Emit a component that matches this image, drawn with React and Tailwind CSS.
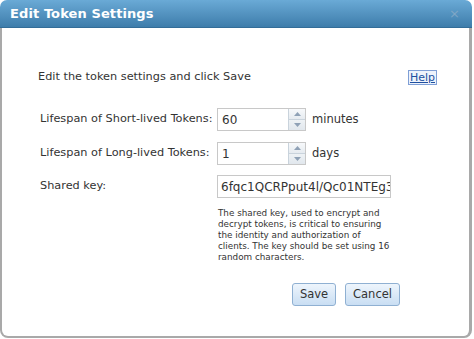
import React from "react";

function Spinner() {
  return (
    <div className="flex flex-col w-[17px] h-full border-l border-[#c9d3dc]">
      <div className="flex-1 flex items-center justify-center bg-gradient-to-b from-[#f7f9fb] to-[#e6ebf0] border-b border-[#c9d3dc]">
        <svg width="7" height="4" viewBox="0 0 7 4"><path d="M0 4 L3.5 0 L7 4 Z" fill="#8fa1b6" /></svg>
      </div>
      <div className="flex-1 flex items-center justify-center bg-gradient-to-b from-[#eef2f5] to-[#e1e7ed]">
        <svg width="7" height="4" viewBox="0 0 7 4"><path d="M0 0 L3.5 4 L7 0 Z" fill="#8fa1b6" /></svg>
      </div>
    </div>
  );
}

function NumberField({ value, unit }) {
  return (
    <div className="flex items-center gap-[6px]">
      <div className="flex w-[89px] h-[23px] border border-[#c8c8c8] bg-white">
        <div className="flex-1 flex items-center pl-[4px] text-[12px] text-[#333]">{value}</div>
        <Spinner />
      </div>
      <span className="text-[11.5px] text-[#333]">{unit}</span>
    </div>
  );
}

const helpLines = [
  "The shared key, used to encrypt and",
  "decrypt tokens, is critical to ensuring",
  "the identity and authorization of",
  "clients. The key should be set using 16",
  "random characters.",
];

export default function App() {
  return (
    <div className="w-[474px] h-[339px] bg-white" style={{ fontFamily: '"DejaVu Sans", Verdana, sans-serif' }}>
      <div className="w-[472px] h-[338px] flex flex-col">
        <div className="h-[28px] shrink-0 rounded-t-[7px] bg-gradient-to-b from-[#6aaad6] to-[#3e7dab] border-b border-[#336d98] flex items-center justify-between pl-[10px] pr-[12px]">
          <span className="text-white font-bold text-[13px] tracking-[0.1px]">Edit Token Settings</span>
          <span className="text-[#7fa6c6] text-[13px] leading-none">×</span>
        </div>
        <div className="flex-1 border-l-2 border-r-[3px] border-b-2 border-[#a9a9a9] rounded-b-[8px] bg-white flex flex-col pl-[36px] pr-[32px] pt-[41px]">
          <div className="flex items-center justify-between h-[16px]">
            <span className="text-[11.3px] text-[#333] mt-[1px]">Edit the token settings and click Save</span>
            <span className="text-[11px] text-[#2050a0] underline bg-[#eef3fb] border border-[#7f9fd6] px-[1px] leading-[13px]">Help</span>
          </div>
          <div className="mt-[23px] flex flex-col gap-[11px] pl-[2px]">
            <div className="flex items-center">
              <span className="w-[177px] whitespace-nowrap text-[11.3px] text-[#333]">Lifespan of Short-lived Tokens:</span>
              <NumberField value="60" unit="minutes" />
            </div>
            <div className="flex items-center">
              <span className="w-[177px] whitespace-nowrap text-[11.3px] text-[#333]">Lifespan of Long-lived Tokens:</span>
              <NumberField value="1" unit="days" />
            </div>
            <div className="flex items-center -mt-[1px]">
              <span className="w-[177px] whitespace-nowrap text-[11.3px] text-[#333]">Shared key:</span>
              <div className="w-[174px] h-[23px] border border-[#c8c8c8] overflow-hidden whitespace-nowrap flex items-center pl-[3px] text-[12px] text-[#333]">
                6fqc1QCRPput4l/Qc01NTEg3eQ
              </div>
            </div>
          </div>
          <div className="ml-[180px] mt-[10px] w-[200px] text-[8.8px] leading-[11px] text-[#333]">
            {helpLines.map((l) => (
              <div key={l} className="whitespace-nowrap">{l}</div>
            ))}
          </div>
          <div className="mt-[20px] flex gap-[9px] ml-[254px]">
            <button className="h-[23px] w-[44px] rounded-[3px] border border-[#8fb0d2] bg-gradient-to-b from-[#eef5fc] to-[#c9def3] text-[11.5px] text-[#333]">Save</button>
            <button className="h-[23px] w-[55px] rounded-[3px] border border-[#8fb0d2] bg-gradient-to-b from-[#eef5fc] to-[#c9def3] text-[11.5px] text-[#333]">Cancel</button>
          </div>
        </div>
      </div>
    </div>
  );
}
